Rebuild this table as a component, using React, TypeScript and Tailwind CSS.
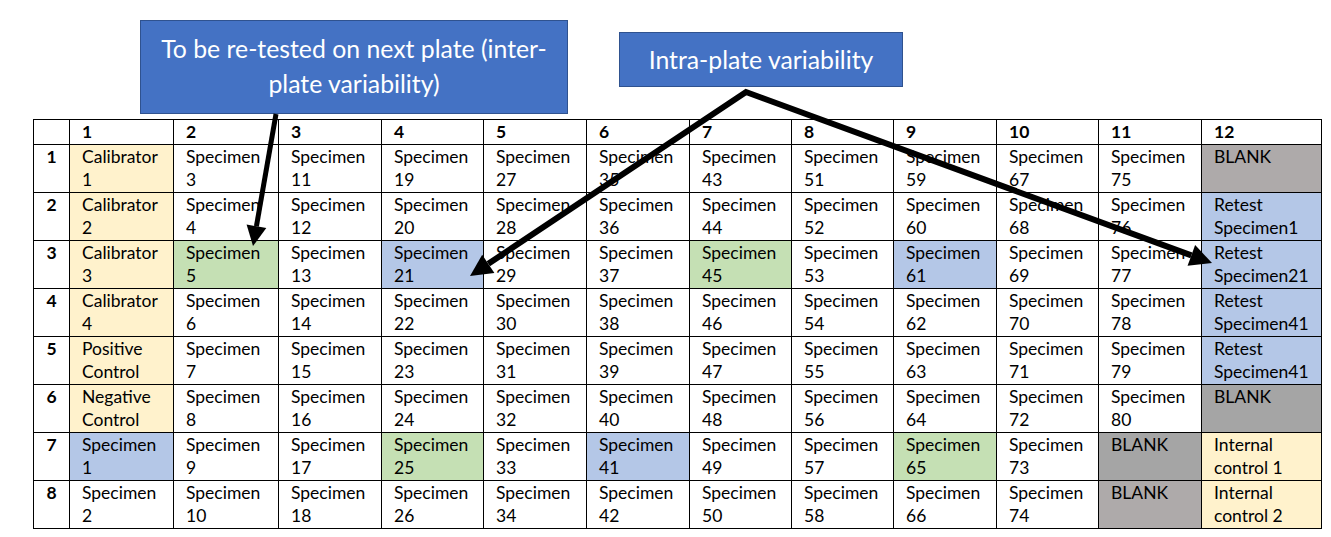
import React from "react";

type Cell = { text: string[]; bg?: string };

const Y = "bg-[#FFF2CC]";
const G = "bg-[#C5E0B4]";
const B = "bg-[#B4C7E7]";
const GR1 = "bg-[#AEAAAA]";
const GR2 = "bg-[#A5A5A5]";

function buildRows(): Cell[][] {
  const rows: Cell[][] = [];
  const col1: Cell[] = [
    { text: ["Calibrator", "1"], bg: Y },
    { text: ["Calibrator", "2"], bg: Y },
    { text: ["Calibrator", "3"], bg: Y },
    { text: ["Calibrator", "4"], bg: Y },
    { text: ["Positive", "Control"], bg: Y },
    { text: ["Negative", "Control"], bg: Y },
    { text: ["Specimen", "1"], bg: B },
    { text: ["Specimen", "2"] },
  ];
  const col12: Cell[] = [
    { text: ["BLANK"], bg: GR1 },
    { text: ["Retest", "Specimen1"], bg: B },
    { text: ["Retest", "Specimen21"], bg: B },
    { text: ["Retest", "Specimen41"], bg: B },
    { text: ["Retest", "Specimen41"], bg: B },
    { text: ["BLANK"], bg: GR2 },
    { text: ["Internal", "control 1"], bg: Y },
    { text: ["Internal", "control 2"], bg: Y },
  ];
  const colored: Record<string, string> = {
    "3-2": G,
    "3-4": B,
    "3-7": G,
    "3-9": B,
    "7-4": G,
    "7-6": B,
    "7-9": G,
  };
  for (let r = 1; r <= 8; r++) {
    const row: Cell[] = [col1[r - 1]];
    for (let c = 2; c <= 11; c++) {
      if (c === 11 && r === 7) {
        row.push({ text: ["BLANK"], bg: GR2 });
        continue;
      }
      if (c === 11 && r === 8) {
        row.push({ text: ["BLANK"], bg: GR1 });
        continue;
      }
      const n = (c - 2) * 8 + r + 2;
      row.push({ text: ["Specimen", String(n)], bg: colored[`${r}-${c}`] });
    }
    row.push(col12[r - 1]);
    rows.push(row);
  }
  return rows;
}

function arrow(x1: number, y1: number, x2: number, y2: number, len = 22, half = 10) {
  const dx = x2 - x1;
  const dy = y2 - y1;
  const L = Math.hypot(dx, dy);
  const ux = dx / L;
  const uy = dy / L;
  const bx = x2 - ux * len;
  const by = y2 - uy * len;
  const px = -uy * half;
  const py = ux * half;
  return {
    base: [bx, by] as [number, number],
    head: `${x2},${y2} ${bx + px},${by + py} ${bx - px},${by - py}`,
  };
}

export default function App() {
  const rows = buildRows();
  const a1 = arrow(276, 114, 253, 246, 20, 10);
  const aL = arrow(746, 92, 470, 276, 22, 11);
  const aR = arrow(746, 92, 1212, 263, 22, 11);

  return (
    <div
      className="relative w-[1331px] h-[537px] bg-white overflow-hidden"
      style={{ fontFamily: "Lato, 'Open Sans', sans-serif" }}
    >
      <div className="pt-[119px] pl-[33px]">
        <div className="grid w-fit grid-cols-[35px_103px_104px_102px_101px_102px_102px_101px_101px_102px_101px_102px_119px] grid-rows-[24px_repeat(8,47px)] gap-px bg-black p-px text-[17.5px] leading-[23px] text-black">
          <div className="bg-white" />
          {Array.from({ length: 12 }, (_, i) => (
            <div key={i} className="bg-white pl-[12px] font-bold">
              {i + 1}
            </div>
          ))}
          {rows.map((row, ri) => (
            <React.Fragment key={ri}>
              <div className="bg-white text-center font-bold">{ri + 1}</div>
              {row.map((cell, ci) => (
                <div key={ci} className={`${cell.bg ?? "bg-white"} pl-[12px] whitespace-nowrap`}>
                  {cell.text.map((t, ti) => (
                    <div key={ti}>{t}</div>
                  ))}
                </div>
              ))}
            </React.Fragment>
          ))}
        </div>
      </div>

      <div className="absolute left-[140px] top-[20px] w-[428px] h-[94px] bg-[#4472C4] border-[1.5px] border-[#2F528F] flex items-center justify-center text-center text-white text-[24.8px] leading-[35px]">
        <div className="pb-[2px]">
          To be re-tested on next plate (inter-
          <br />
          plate variability)
        </div>
      </div>

      <div className="absolute left-[619px] top-[32px] w-[284px] h-[55px] bg-[#4472C4] border-[1.5px] border-[#2F528F] flex items-center justify-center text-white text-[24.8px]">
        Intra-plate variability
      </div>

      <svg
        className="absolute left-0 top-0 pointer-events-none"
        width="1331"
        height="537"
        viewBox="0 0 1331 537"
      >
        <line x1={276} y1={114} x2={a1.base[0]} y2={a1.base[1]} stroke="black" strokeWidth={5} />
        <polygon points={a1.head} fill="black" />
        <polyline
          points={`${aL.base[0]},${aL.base[1]} 746,92 ${aR.base[0]},${aR.base[1]}`}
          fill="none"
          stroke="black"
          strokeWidth={6}
          strokeLinejoin="miter"
          strokeMiterlimit={10}
        />
        <polygon points={aL.head} fill="black" />
        <polygon points={aR.head} fill="black" />
      </svg>
    </div>
  );
}
